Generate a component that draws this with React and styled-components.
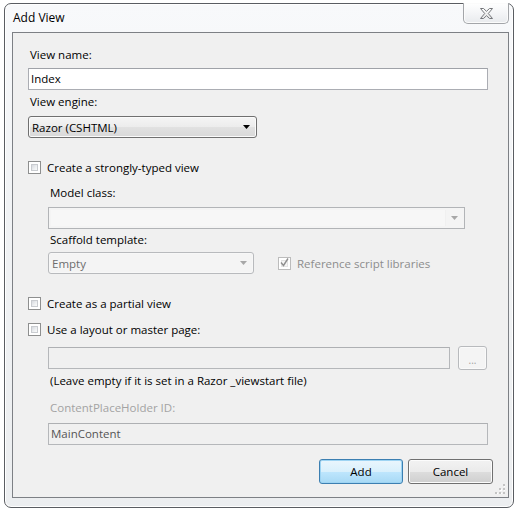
import React from 'react'
import styled, { createGlobalStyle } from 'styled-components'

const GlobalStyle = createGlobalStyle`
  html, body {
    margin: 0;
    padding: 0;
    background: #ffffff;
  }
  body {
    font-family: "Open Sans", "Noto Sans", sans-serif;
    font-size: 11.5px;
    color: #000000;
  }
`

const Window = styled.div`
  box-sizing: border-box;
  width: 510px;
  height: 505px;
  margin: 3px 0 0 4px;
  padding: 0 4px 9px 7px;
  border: 1px solid #5a5d62;
  border-radius: 7px;
  background: linear-gradient(180deg, #f8f9fb 0%, #f1f3f5 40%, #eceef0 100%);
  box-shadow: inset 0 0 0 1px #ffffff;
  display: flex;
  flex-direction: column;
`

const TitleBar = styled.div`
  height: 28px;
  display: flex;
  justify-content: space-between;
  align-items: flex-start;
`

const Title = styled.div`
  padding-left: 1px;
  line-height: 28px;
  font-size: 12px;
  color: #000000;
`

const CloseButton = styled.div`
  box-sizing: border-box;
  width: 46px;
  height: 21px;
  margin-top: -1px;
  border: 1px solid #a3a5a9;
  border-top: none;
  border-radius: 0 0 5px 5px;
  background: linear-gradient(180deg, #ffffff 0%, #f4f5f7 50%, #e8eaed 100%);
  box-shadow: inset 0 0 0 1px #fbfbfb;
  display: flex;
  align-items: center;
  justify-content: center;
`

const Client = styled.div`
  position: relative;
  box-sizing: border-box;
  width: 497px;
  height: 466px;
  border: 1px solid #7d8085;
  background: #f0f0f0;
  padding: 14px 15px 0 15px;
  display: flex;
  flex-direction: column;
`

const Label = styled.div`
  line-height: 16px;
  height: 16px;
  padding-left: ${p => (p.$indent ? 22 : 2)}px;
  margin-top: ${p => p.$top || 0}px;
  color: ${p => (p.$disabled ? '#a3a3a3' : '#000000')};
  white-space: nowrap;
`

const TextBox = styled.div`
  box-sizing: border-box;
  width: ${p => p.$width}px;
  height: 22px;
  margin-top: ${p => p.$top || 0}px;
  margin-left: ${p => (p.$indent ? 20 : 0)}px;
  border: 1px solid ${p => (p.$disabled ? '#b5b7ba' : '#abadb3')};
  border-top-color: ${p => (p.$disabled ? '#aeb0b3' : '#9fa2a8')};
  background: ${p => (p.$disabled ? '#f0f0f0' : '#ffffff')};
  color: ${p => (p.$disabled ? '#555555' : '#000000')};
  padding-left: 2px;
  line-height: 20px;
  flex-shrink: 0;
`

const DropDown = styled.div`
  box-sizing: border-box;
  width: ${p => p.$width}px;
  height: 22px;
  margin-top: ${p => p.$top || 0}px;
  border: 1px solid ${p => (p.$disabled ? '#b8babd' : '#707070')};
  border-radius: 3px;
  background: ${p =>
    p.$disabled
      ? '#f4f4f4'
      : 'linear-gradient(180deg, #f5f5f5 0%, #ececec 50%, #e1e1e1 51%, #d9d9d9 100%)'};
  box-shadow: inset 0 0 0 1px ${p => (p.$disabled ? '#f7f7f7' : '#fbfbfb')};
  color: ${p => (p.$disabled ? '#6d6d6d' : '#000000')};
  display: flex;
  align-items: center;
  justify-content: space-between;
  padding: 0 6px 0 3px;
  flex-shrink: 0;
`

const ComboBox = styled.div`
  box-sizing: border-box;
  width: ${p => p.$width}px;
  height: 22px;
  margin-top: ${p => p.$top || 0}px;
  margin-left: 20px;
  border: 1px solid #b2b4b7;
  background: #f4f4f4;
  display: flex;
  align-items: stretch;
  padding: 2px;
`

const ComboEdit = styled.div`
  flex: 1;
  background: #f7f7f7;
  border-right: 1px solid #f0f0f0;
`

const ComboArrow = styled.div`
  width: 16px;
  display: flex;
  align-items: center;
  justify-content: center;
`

const Arrow = ({ color }) => (
  <svg width="7" height="4" viewBox="0 0 7 4">
    <path d="M0 0 L7 0 L3.5 4 Z" fill={color} />
  </svg>
)

const CheckRow = styled.div`
  display: flex;
  align-items: center;
  height: 16px;
  margin-top: ${p => p.$top || 0}px;
  margin-left: ${p => p.$left || 0}px;
  gap: 6px;
  color: ${p => (p.$disabled ? '#8d8d8d' : '#000000')};
  white-space: nowrap;
`

const CheckBox = styled.span`
  box-sizing: border-box;
  width: 13px;
  height: 13px;
  border: 1px solid ${p => (p.$disabled ? '#bcbcbc' : '#8e8f8f')};
  background: #ffffff;
  padding: 2px;
  display: flex;
  flex-shrink: 0;
`

const CheckInner = styled.span`
  flex: 1;
  display: flex;
  align-items: center;
  justify-content: center;
  border: 1px solid ${p => (p.$disabled ? '#e4e4e4' : '#c9ccd0')};
  background: ${p =>
    p.$disabled ? '#f6f6f6' : 'linear-gradient(135deg, #d7dadf 0%, #eef0f2 60%, #fafafa 100%)'};
  position: relative;
`

const CheckMark = styled.svg`
  position: absolute;
  left: -2px;
  top: -3px;
`

const Check = ({ checked, disabled }) => (
  <CheckBox $disabled={disabled}>
    <CheckInner $disabled={disabled}>
      {checked && (
        <CheckMark width="9" height="9" viewBox="0 0 9 9">
          <path d="M1 4.5 L3.5 7.5 L8 0.5" fill="none" stroke="#8f8f8f" strokeWidth="1.4" />
        </CheckMark>
      )}
    </CheckInner>
  </CheckBox>
)

const Row = styled.div`
  display: flex;
  align-items: center;
  margin-top: ${p => p.$top || 0}px;
  margin-left: ${p => (p.$indent ? 20 : 0)}px;
  gap: ${p => p.$gap || 0}px;
`

const BrowseButton = styled.div`
  box-sizing: border-box;
  width: 29px;
  height: 24px;
  border: 1px solid #b8babd;
  border-radius: 3px;
  background: #f4f4f4;
  box-shadow: inset 0 0 0 1px #fafafa;
  color: #a0a0a0;
  font-size: 10px;
  display: flex;
  align-items: flex-end;
  justify-content: center;
  padding-bottom: 4px;
  line-height: 10px;
`

const Note = styled.div`
  line-height: 16px;
  margin-top: 3px;
  padding-left: 22px;
  white-space: nowrap;
`

const Footer = styled.div`
  display: flex;
  justify-content: flex-end;
  gap: 5px;
  margin-top: 14px;
`

const Button = styled.div`
  box-sizing: border-box;
  width: ${p => p.$width}px;
  height: 25px;
  border: 1px solid ${p => (p.$primary ? '#3c7fb1' : '#707070')};
  border-radius: 3px;
  background: ${p =>
    p.$primary
      ? 'linear-gradient(180deg, #eaf6fd 0%, #d9f0fc 50%, #bee6fd 51%, #a7d9f5 100%)'
      : 'linear-gradient(180deg, #f2f2f2 0%, #ebebeb 50%, #dddddd 51%, #cfcfcf 100%)'};
  box-shadow: inset 0 0 0 1px ${p => (p.$primary ? '#9ed4f3' : '#fcfcfc')};
  display: flex;
  align-items: center;
  justify-content: center;
  color: #000000;
`

const Grip = styled.svg`
  position: absolute;
  right: 3px;
  bottom: 3px;
`

const GripDots = () => (
  <Grip width="10" height="10" viewBox="0 0 10 10">
    {[[8, 0], [8, 4], [4, 4], [8, 8], [4, 8], [0, 8]].map(([x, y]) => (
      <g key={`${x}-${y}`}>
        <rect x={x + 1} y={y + 1} width="2" height="2" fill="#ffffff" />
        <rect x={x} y={y} width="2" height="2" fill="#c4c4c4" />
      </g>
    ))}
  </Grip>
)

const CloseGlyph = () => (
  <svg width="13" height="11" viewBox="0 0 13 11">
    <defs>
      <linearGradient id="xfill" x1="0" y1="0" x2="0" y2="1">
        <stop offset="0" stopColor="#ffffff" />
        <stop offset="1" stopColor="#e2e2e2" />
      </linearGradient>
    </defs>
    <path
      d="M0.5 0.5 L3.5 0.5 L6.5 3.3 L9.5 0.5 L12.5 0.5 L8.3 5.5 L12.5 10.5 L9.5 10.5 L6.5 7.7 L3.5 10.5 L0.5 10.5 L4.7 5.5 Z"
      fill="url(#xfill)"
      stroke="#75777b"
      strokeWidth="1"
      strokeLinejoin="round"
    />
  </svg>
)

const App = () => {
  return (
    <>
      <GlobalStyle />
      <Window>
        <TitleBar>
          <Title>{'Add View'}</Title>
          <CloseButton>
            <CloseGlyph />
          </CloseButton>
        </TitleBar>
        <Client>
          <Label>{'View name:'}</Label>
          <TextBox $width={460} $top={5}>{'Index'}</TextBox>
          <Label $top={4}>{'View engine:'}</Label>
          <DropDown $width={229} $top={6}>
            <span>{'Razor (CSHTML)'}</span>
            <Arrow color="#000000" />
          </DropDown>

          <CheckRow $top={21}>
            <Check />
            <span>{'Create a strongly-typed view'}</span>
          </CheckRow>
          <Label $indent $top={10}>{'Model class:'}</Label>
          <ComboBox $width={417} $top={6}>
            <ComboEdit />
            <ComboArrow>
              <Arrow color="#a7a7a7" />
            </ComboArrow>
          </ComboBox>
          <Label $indent $top={3}>{'Scaffold template:'}</Label>
          <Row $indent $top={4} $gap={24}>
            <DropDown $width={206} $disabled>
              <span>{'Empty'}</span>
              <Arrow color="#a7a7a7" />
            </DropDown>
            <CheckRow $disabled>
              <Check checked disabled />
              <span>{'Reference script libraries'}</span>
            </CheckRow>
          </Row>

          <CheckRow $top={21}>
            <Check />
            <span>{'Create as a partial view'}</span>
          </CheckRow>
          <CheckRow $top={10}>
            <Check />
            <span>{'Use a layout or master page:'}</span>
          </CheckRow>
          <Row $indent $top={9} $gap={8}>
            <TextBox $width={402} $disabled />
            <BrowseButton>{'...'}</BrowseButton>
          </Row>
          <Note>{'(Leave empty if it is set in a Razor _viewstart file)'}</Note>
          <Label $indent $disabled $top={11}>{'ContentPlaceHolder ID:'}</Label>
          <TextBox $width={440} $indent $disabled $top={7}>{'MainContent'}</TextBox>

          <Footer>
            <Button $primary $width={84}>{'Add'}</Button>
            <Button $width={85}>{'Cancel'}</Button>
          </Footer>
          <GripDots />
        </Client>
      </Window>
    </>
  )
}

export default App
